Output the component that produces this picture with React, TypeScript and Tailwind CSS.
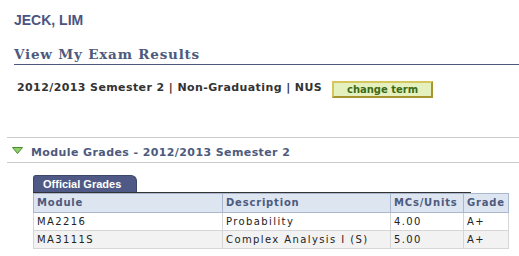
export default function App() {
  const rows = [
    { mod: "MA2216", desc: "Probability", mc: "4.00", grade: "A+", bg: "bg-white" },
    { mod: "MA3111S", desc: "Complex Analysis I (S)", mc: "5.00", grade: "A+", bg: "bg-[#f2f2f2]" },
  ];
  const sans = "font-['DejaVu_Sans',sans-serif]";
  return (
    <div className="w-[519px] h-[256px] bg-white overflow-hidden relative">
      <div className="pl-[14px] pt-[12px] text-[14px] leading-[16px] font-bold font-['Liberation_Sans',Arial,sans-serif] text-[#4b5483]">
        JECK, LIM
      </div>
      <div className="ml-[14px] mt-[17px] pb-[1px] border-b border-[#4d5a7e] text-[13.5px] leading-[18px] font-bold font-['DejaVu_Serif',serif] text-[#4d5a7e] tracking-[0.8px]">
        View My Exam Results
      </div>
      <div className="flex items-start mt-[16px] pl-[17px]">
        <div className={`${sans} font-bold text-[11px] leading-[13px] tracking-[0.4px] text-[#333333]`}>
          2012/2013 Semester 2 | Non-Graduating | NUS
        </div>
        <div className="ml-[10px] w-[101px] h-[17px] flex items-center justify-center bg-[#e4f0be] border-2 border-t-[#d6c65c] border-l-[#d6c65c] border-b-[#a89530] border-r-[#a89530]">
          <span className={`${sans} font-bold text-[10px] leading-[12px] text-[#3d6a14]`}>change term</span>
        </div>
      </div>
      <div className="ml-[7px] mt-[39px] border-t border-[#cccccc]" />
      <div className="ml-[7px] pt-[8px] pb-[3px] border-b border-[#cccccc] flex items-start">
        <svg width="11" height="7" viewBox="0 0 11 7" className="ml-[5px] mt-[1px]">
          <polygon points="0.5,0.5 10.5,0.5 5.5,6.5" fill="#8fcf6a" stroke="#4a8f2c" strokeWidth="1" />
        </svg>
        <div className={`ml-[8px] ${sans} font-bold text-[11px] leading-[13px] tracking-[0.4px] text-[#4d5a7e]`}>
          Module Grades - 2012/2013 Semester 2
        </div>
      </div>
      <div className="ml-[33px] mt-[12px] w-[475px]">
        <div className="w-[438px] border-b border-[#333333] flex">
          <div className="w-[104px] h-[17px] bg-[#4e5a85] rounded-tl-[3px] rounded-tr-[6px] border border-b-0 border-[#3d476a] flex items-center pl-[9px]">
            <span className="text-white font-bold text-[11px] leading-[13px] font-['Liberation_Sans',Arial,sans-serif]">Official Grades</span>
          </div>
        </div>
        <table className="border-collapse w-[475px] table-fixed">
          <colgroup>
            <col className="w-[189px]" />
            <col className="w-[168px]" />
            <col className="w-[73px]" />
            <col className="w-[45px]" />
          </colgroup>
          <thead>
            <tr className="h-[19px] bg-[#dde5f0]">
              {["Module", "Description", "MCs/Units", "Grade"].map((h) => (
                <th
                  key={h}
                  className={`border border-[#a9b8d0] text-left px-[3px] py-0 ${sans} font-bold text-[10px] leading-[12px] tracking-[0.8px] text-[#4d5a7e]`}
                >
                  {h}
                </th>
              ))}
            </tr>
          </thead>
          <tbody>
            {rows.map((r) => (
              <tr key={r.mod} className={`h-[18px] ${r.bg}`}>
                {[r.mod, r.desc, r.mc, r.grade].map((c, i) => (
                  <td
                    key={i}
                    className={`border border-[#d6d6d6] px-[3px] py-0 ${sans} text-[10px] leading-[12px] tracking-[1.4px] text-[#222222]`}
                  >
                    {c}
                  </td>
                ))}
              </tr>
            ))}
          </tbody>
        </table>
      </div>
    </div>
  );
}
